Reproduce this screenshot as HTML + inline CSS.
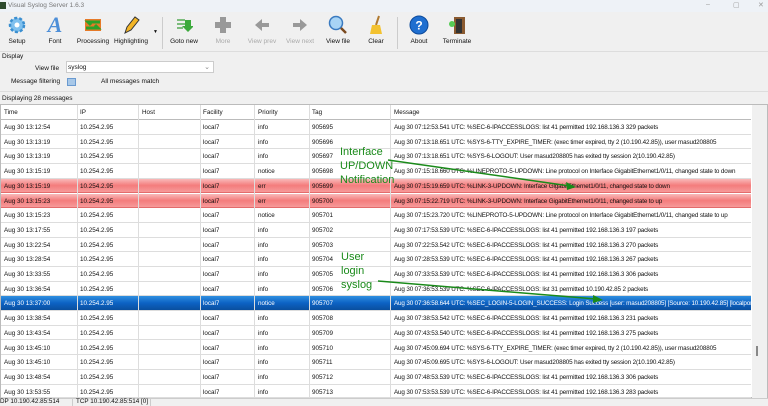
<!DOCTYPE html>
<html><head><meta charset="utf-8"><style>
*{margin:0;padding:0;box-sizing:border-box}
body{width:768px;height:406px;overflow:hidden;background:#f0f0f0;font-family:"Liberation Sans",sans-serif;position:relative;font-size:6.3px;color:#111}
.a{position:absolute}
.tb{position:absolute;top:13px;width:50px;text-align:center;font-size:6.5px}
.tb .ic{height:24px;display:flex;align-items:center;justify-content:center}
.tb span{display:block;margin-top:1px}
.dis{color:#aaa}
.row{position:absolute;left:1px;width:750px;height:14.7px;border-bottom:1px solid #ddd;background:#fff}
.row div{position:absolute;top:4px;white-space:nowrap;overflow:hidden}
.red{background:linear-gradient(#f9b9b9,#f47c7c 50%,#f69a9a);border-bottom:1px solid #e36b6b}
.sel{background:linear-gradient(#2f8fe0,#0d62c4 50%,#0a4f9e);color:#fff}
.hd{position:absolute;top:105px;height:15px;background:#fff;border-bottom:1px solid #bbb;left:1px;width:750px}
.hd div{position:absolute;top:4px}
.vl{position:absolute;top:105px;width:1px;height:293px;background:#ddd}
.g{color:#1a8a1a;font-size:11px;position:absolute;line-height:14px}
.msg{letter-spacing:-0.15px}
</style></head><body>
<div class="a" style="left:0;top:0;width:768px;height:12px;background:#eef2f7"></div>
<div class="a" style="left:0;top:2px;width:6px;height:7px;background:#2d4a2d"></div>
<div class="a" style="left:8px;top:2px;font-size:6.5px;color:#777">Visual Syslog Server 1.6.3</div>
<div class="a" style="left:706px;top:1px;font-size:7px;color:#999">–</div>
<div class="a" style="left:733px;top:1px;font-size:7px;color:#999">▢</div>
<div class="a" style="left:758px;top:1px;font-size:7px;color:#999">✕</div>

<div class="tb" style="left:-8px"><div class="ic"><svg width="18" height="18" viewBox="0 0 18 18"><circle cx="9" cy="9" r="7" fill="#7fc0ee" stroke="#3b8fd0" stroke-dasharray="3 2" stroke-width="2.5"/><circle cx="9" cy="9" r="2.5" fill="#fff"/></svg></div><span>Setup</span></div>
<div class="tb" style="left:30px"><div class="ic" style="font:italic bold 22px 'Liberation Serif';color:#4e8fd8">A</div><span>Font</span></div>
<div class="tb" style="left:68px"><div class="ic"><svg width="20" height="18"><rect x="2" y="3" width="16" height="12" fill="#e67a28"/><path d="M3 12h12l-3-3M17 6H5l3 3" stroke="#2aa12a" stroke-width="3" fill="none"/></svg></div><span>Processing</span></div>
<div class="tb" style="left:106px"><div class="ic"><svg width="20" height="20"><path d="M4 18l2-6 8-10 4 3-8 10z" fill="#f3b526" stroke="#333" stroke-width="1"/></svg></div><span>Highlighting</span></div>
<div class="a" style="left:153px;top:29px;font-size:5px">▼</div>
<div class="a" style="left:162px;top:17px;width:1px;height:32px;background:#ccc"></div>
<div class="tb" style="left:159px"><div class="ic"><svg width="18" height="18"><path d="M2 4h8M2 8h8M2 12h6" stroke="#5a5" stroke-width="1.5"/><path d="M10 4h6v6h3l-6 6-6-6h3z" fill="#3caa3c"/></svg></div><span>Goto new</span></div>
<div class="tb dis" style="left:198px"><div class="ic"><svg width="18" height="18"><path d="M6 1h6v5h5v6h-5v5H6v-5H1V6h5z" fill="#999"/></svg></div><span>More</span></div>
<div class="tb dis" style="left:237px"><div class="ic"><svg width="16" height="14"><path d="M1 7l7-6v4h7v4H8v4z" fill="#999"/></svg></div><span>View prev</span></div>
<div class="tb dis" style="left:275px"><div class="ic"><svg width="16" height="14"><path d="M15 7L8 1v4H1v4h7v4z" fill="#999"/></svg></div><span>View next</span></div>
<div class="tb" style="left:313px"><div class="ic"><svg width="20" height="20"><circle cx="8" cy="8" r="6.5" fill="#a8d4f5" stroke="#3a7ac0" stroke-width="1.5"/><path d="M13 13l5 5" stroke="#7a4a20" stroke-width="2.5"/></svg></div><span>View file</span></div>
<div class="tb" style="left:351px"><div class="ic"><svg width="18" height="20"><path d="M12 1l-3 9" stroke="#b07a30" stroke-width="2"/><path d="M5 10h8l2 9H3z" fill="#f3c230"/></svg></div><span>Clear</span></div>
<div class="a" style="left:397px;top:17px;width:1px;height:32px;background:#ccc"></div>
<div class="tb" style="left:394px"><div class="ic"><svg width="20" height="20"><circle cx="10" cy="10" r="9" fill="#1f6fd0" stroke="#0d4a9a"/><text x="10" y="14.5" font-size="12" font-weight="bold" fill="#fff" text-anchor="middle" font-family="Liberation Sans">?</text></svg></div><span>About</span></div>
<div class="tb" style="left:432px"><div class="ic"><svg width="20" height="20"><rect x="7" y="2" width="11" height="17" fill="#8a5a30"/><rect x="9" y="4" width="6" height="14" fill="#333"/><circle cx="5" cy="9" r="3" fill="#5c5"/></svg></div><span>Terminate</span></div>
<div class="a" style="left:0;top:51px;width:768px;height:1px;background:#ddd"></div>

<div class="a" style="left:2px;top:53px;font-size:6.5px">Display</div>
<div class="a" style="left:35px;top:65px;font-size:6.5px">View file</div>
<div class="a" style="left:66px;top:61px;width:148px;height:12px;background:#fff;border:1px solid #ccc"><span style="position:absolute;left:1px;top:2px;font-size:6.5px">syslog</span><span style="position:absolute;right:3px;top:1px;font-size:7px;color:#888">⌄</span></div>
<div class="a" style="left:11px;top:78px;font-size:6.5px">Message filtering</div>
<div class="a" style="left:67px;top:78px;width:9px;height:8px;background:#a8c8e8;border:1px solid #6a9ad0"></div>
<div class="a" style="left:101px;top:78px;font-size:6.5px">All messages match</div>
<div class="a" style="left:0;top:91px;width:768px;height:1px;background:#ddd"></div>
<div class="a" style="left:2px;top:95px;font-size:6.5px">Displaying 28 messages</div>

<div class="a" style="left:0;top:104px;width:768px;height:294px;background:#fff;border:1px solid #bbb"></div>
<div class="hd"><div style="left:3px">Time</div><div style="left:79px">IP</div><div style="left:141px">Host</div><div style="left:202px">Facility</div><div style="left:257px">Priority</div><div style="left:311px">Tag</div><div style="left:393px">Message</div></div>
<div class="a" style="left:752px;top:105px;width:15px;height:293px;background:#f0f0f0"></div>
<div class="a" style="left:756px;top:346px;width:2px;height:10px;background:#888"></div>

<div id="rows"></div>
<script>
var d=[["13:12:54","905695","info","Aug 30 07:12:53.541 UTC: %SEC-6-IPACCESSLOGS: list 41 permitted 192.168.136.3 329 packets"],
["13:13:19","905696","info","Aug 30 07:13:18.651 UTC: %SYS-6-TTY_EXPIRE_TIMER: (exec timer expired, tty 2 (10.190.42.85)), user masud208805"],
["13:13:19","905697","info","Aug 30 07:13:18.651 UTC: %SYS-6-LOGOUT: User masud208805 has exited tty session 2(10.190.42.85)"],
["13:15:19","905698","notice","Aug 30 07:15:18.660 UTC: %LINEPROTO-5-UPDOWN: Line protocol on Interface GigabitEthernet1/0/11, changed state to down"],
["13:15:19","905699","err","Aug 30 07:15:19.659 UTC: %LINK-3-UPDOWN: Interface GigabitEthernet1/0/11, changed state to down"],
["13:15:23","905700","err","Aug 30 07:15:22.719 UTC: %LINK-3-UPDOWN: Interface GigabitEthernet1/0/11, changed state to up"],
["13:15:23","905701","notice","Aug 30 07:15:23.720 UTC: %LINEPROTO-5-UPDOWN: Line protocol on Interface GigabitEthernet1/0/11, changed state to up"],
["13:17:55","905702","info","Aug 30 07:17:53.539 UTC: %SEC-6-IPACCESSLOGS: list 41 permitted 192.168.136.3 197 packets"],
["13:22:54","905703","info","Aug 30 07:22:53.542 UTC: %SEC-6-IPACCESSLOGS: list 41 permitted 192.168.136.3 270 packets"],
["13:28:54","905704","info","Aug 30 07:28:53.539 UTC: %SEC-6-IPACCESSLOGS: list 41 permitted 192.168.136.3 267 packets"],
["13:33:55","905705","info","Aug 30 07:33:53.539 UTC: %SEC-6-IPACCESSLOGS: list 41 permitted 192.168.136.3 306 packets"],
["13:36:54","905706","info","Aug 30 07:36:53.539 UTC: %SEC-6-IPACCESSLOGS: list 31 permitted 10.190.42.85 2 packets"],
["13:37:00","905707","notice","Aug 30 07:36:58.644 UTC: %SEC_LOGIN-5-LOGIN_SUCCESS: Login Success [user: masud208805] [Source: 10.190.42.85] [localport: 22]"],
["13:38:54","905708","info","Aug 30 07:38:53.542 UTC: %SEC-6-IPACCESSLOGS: list 41 permitted 192.168.136.3 231 packets"],
["13:43:54","905709","info","Aug 30 07:43:53.540 UTC: %SEC-6-IPACCESSLOGS: list 41 permitted 192.168.136.3 275 packets"],
["13:45:10","905710","info","Aug 30 07:45:09.694 UTC: %SYS-6-TTY_EXPIRE_TIMER: (exec timer expired, tty 2 (10.190.42.85)), user masud208805"],
["13:45:10","905711","info","Aug 30 07:45:09.695 UTC: %SYS-6-LOGOUT: User masud208805 has exited tty session 2(10.190.42.85)"],
["13:48:54","905712","info","Aug 30 07:48:53.539 UTC: %SEC-6-IPACCESSLOGS: list 41 permitted 192.168.136.3 306 packets"],
["13:53:55","905713","info","Aug 30 07:53:53.539 UTC: %SEC-6-IPACCESSLOGS: list 41 permitted 192.168.136.3 283 packets"]];
var h="";
d.forEach(function(r,i){var c=(i==4||i==5)?" red":(i==12?" sel":"");var t=120+i*14.7;if(t>385)return;
h+='<div class="row'+c+'" style="top:'+t+'px;'+(t+14.7>398?'height:'+(398-t)+'px;':'')+'"><div style="left:3px">Aug 30 '+r[0]+'</div><div style="left:79px">10.254.2.95</div><div style="left:202px">local7</div><div style="left:257px">'+r[2]+'</div><div style="left:311px">'+r[1]+'</div><div class="msg" style="left:393px;width:357px">'+r[3]+'</div></div>';});
[77,138,200,254,309,390].forEach(function(x){h+='<div class="vl" style="left:'+x+'px"></div>';});
document.getElementById("rows").innerHTML=h;
</script>

<div class="g" style="left:340px;top:145px">Interface<br>UP/DOWN<br>Notification</div>
<div class="g" style="left:341px;top:250px">User<br>login<br>syslog</div>
<svg class="a" style="left:0;top:0" width="768" height="406"><path d="M388 160L570 186" stroke="#1a8a1a" stroke-width="1.5"/><path d="M576 187l-10-5 1 8z" fill="#1a8a1a"/><path d="M378 281L596 299" stroke="#1a8a1a" stroke-width="1.5"/><path d="M603 300l-10-5 0 8z" fill="#1a8a1a"/></svg>

<div class="a" style="left:0;top:398px;width:768px;height:8px;background:#f0f0f0;border-top:1px solid #ccc"></div>
<div class="a" style="left:0;top:398px;font-size:6.3px">DP 10.190.42.85:514</div>
<div class="a" style="left:72px;top:398px;width:1px;height:8px;background:#ccc"></div>
<div class="a" style="left:76px;top:398px;font-size:6.3px">TCP 10.190.42.85:514 [0]</div>
<div class="a" style="left:150px;top:398px;width:1px;height:8px;background:#ccc"></div>
</body></html>
